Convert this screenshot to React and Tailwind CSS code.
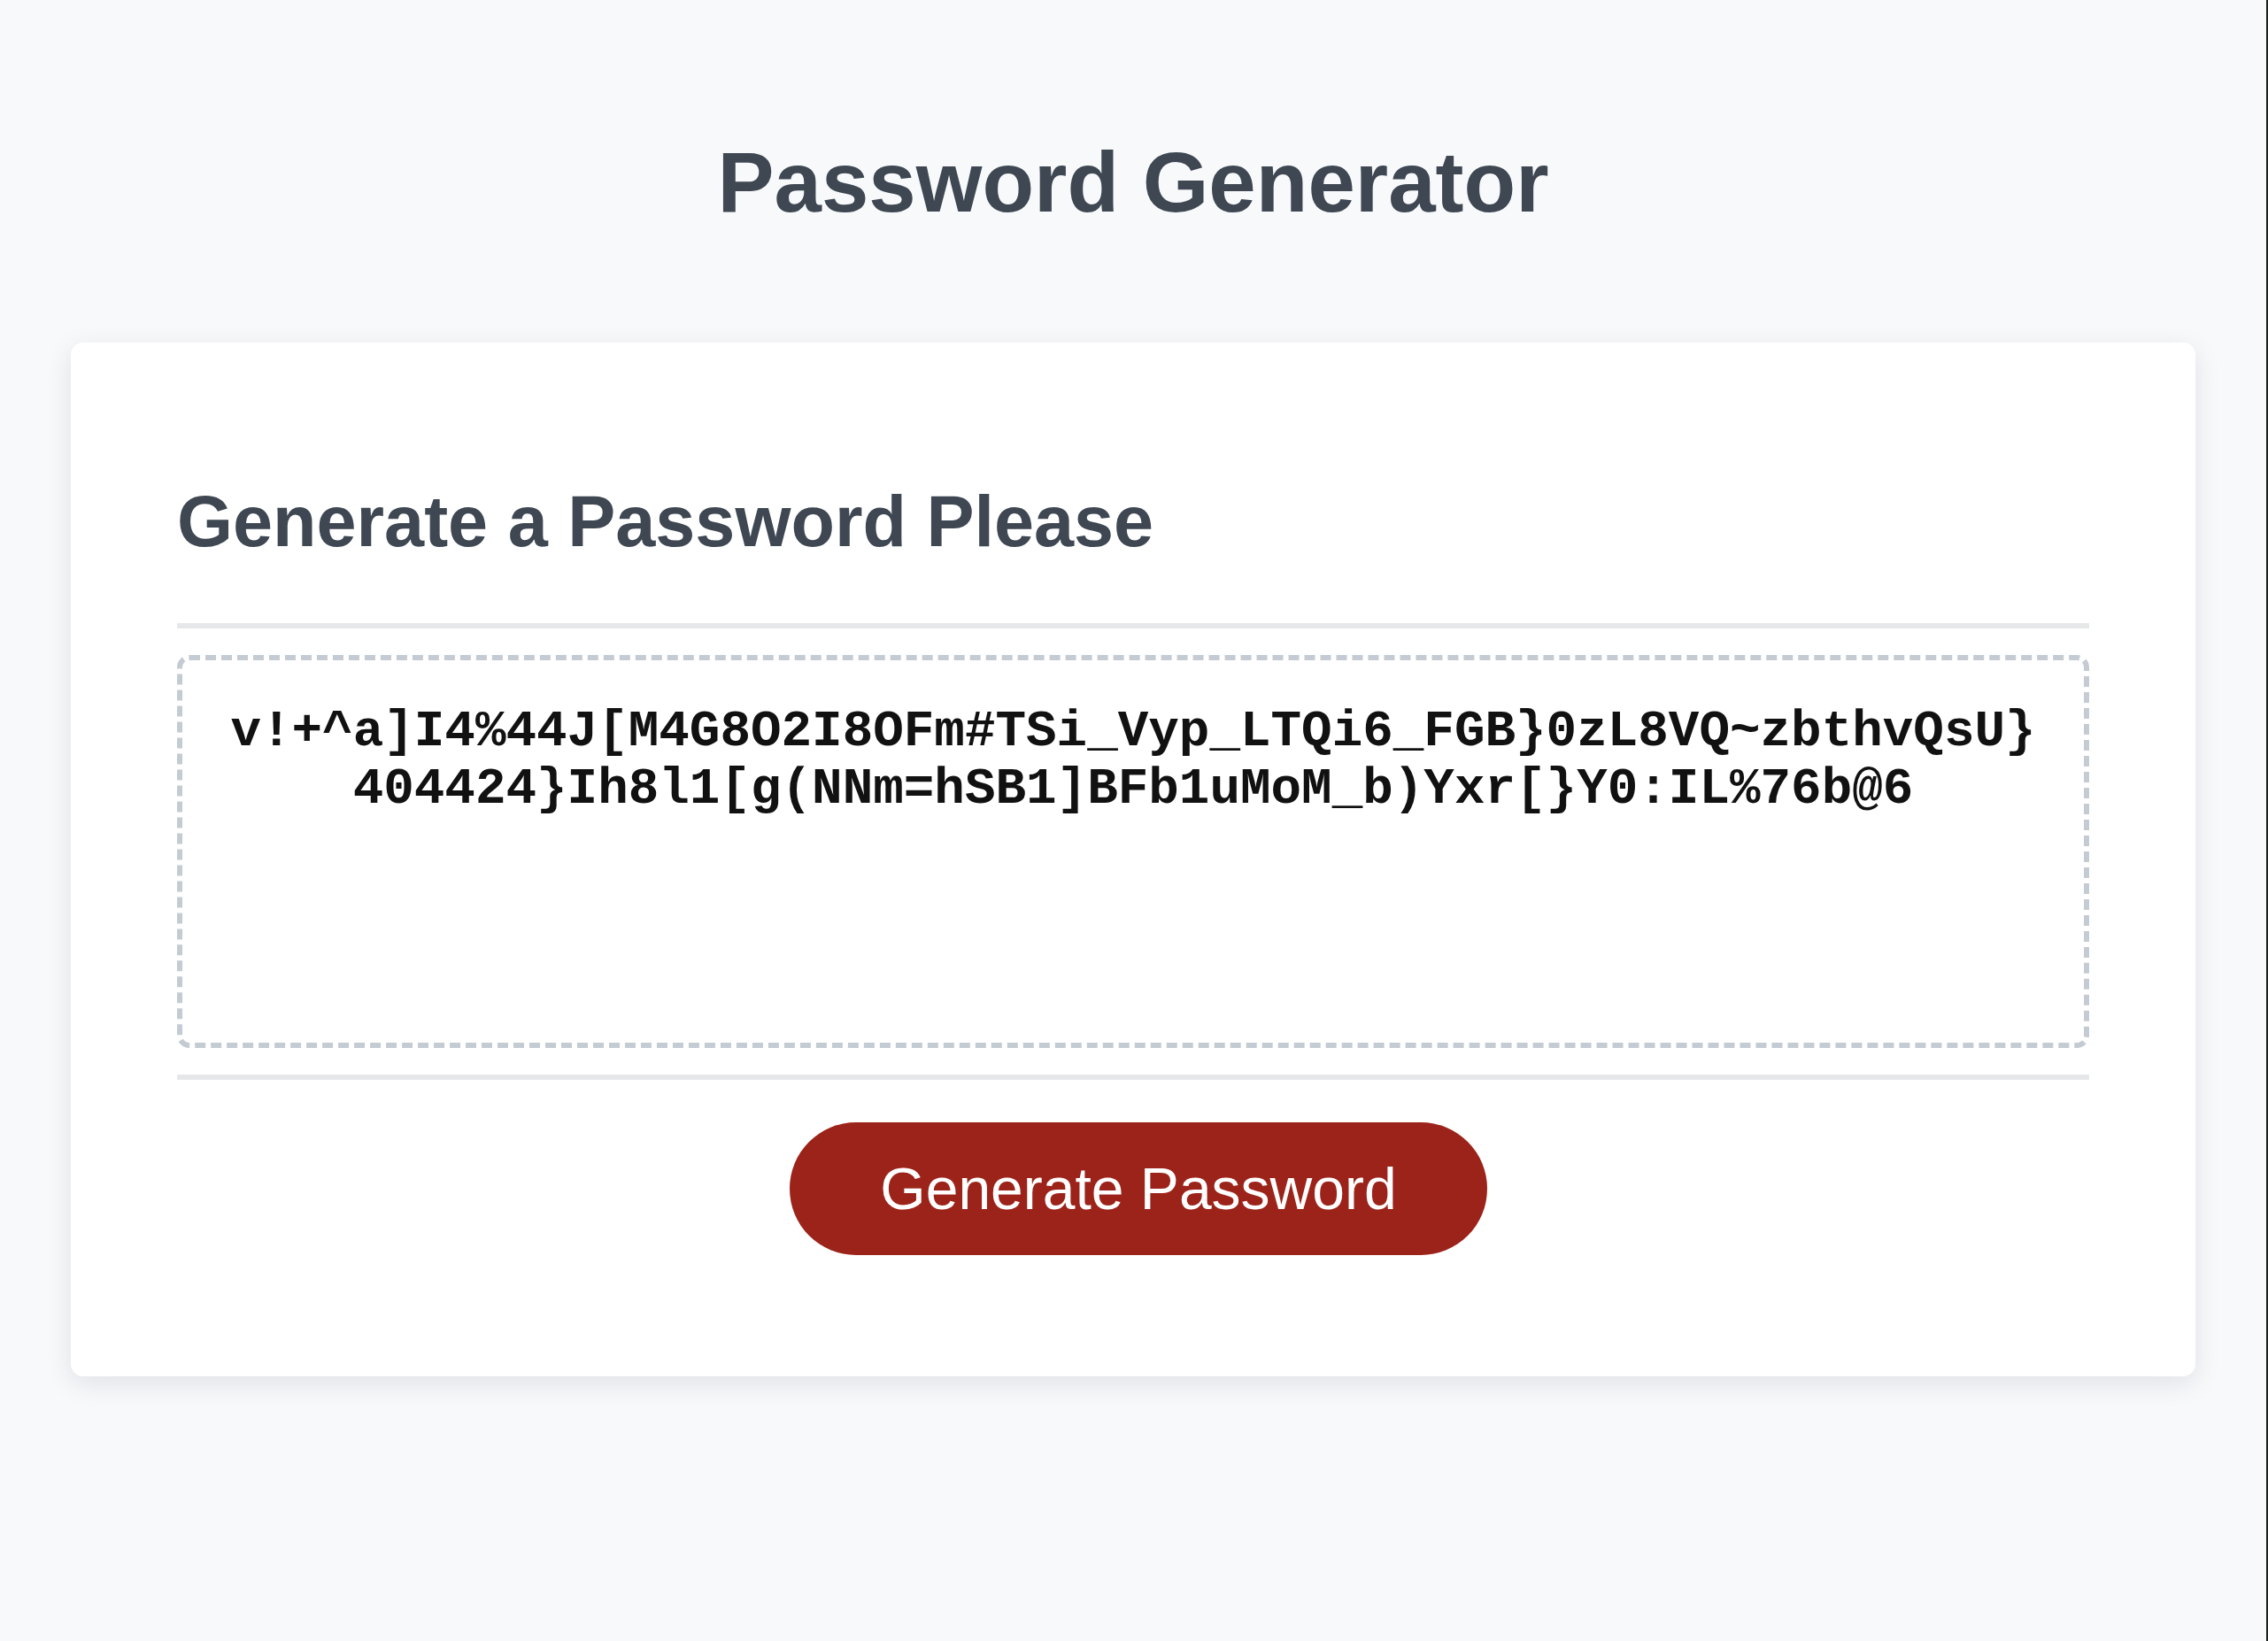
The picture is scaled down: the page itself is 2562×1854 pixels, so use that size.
import React, { useState } from 'react';

const CHARS = 'ABCDEFGHIJKLMNOPQRSTUVWXYZabcdefghijklmnopqrstuvwxyz0123456789!@#$%^&*()_+~[]{}:=';

function makePassword(len = 110) {
  let out = '';
  for (let i = 0; i < len; i++) {
    out += CHARS[Math.floor(Math.random() * CHARS.length)];
  }
  return out;
}

export default function App() {
  const [password, setPassword] = useState(
    'v!+^a]I4%44J[M4G8O2I8OFm#TSi_Vyp_LTQi6_FGB}0zL8VQ~zbthvQsU}404424}Ih8l1[g(NNm=hSB1]BFb1uMoM_b)Yxr[}Y0:IL%76b@6'
  );

  return (
    <div className="flex min-h-screen bg-[#f8f9fb]" style={{ fontFamily: '"Liberation Sans", Arial, sans-serif' }}>
      <main className="flex-1 px-[80px] pb-[120px]">
        {/* Header */}
        <h1 className="mt-[152px] text-center text-[96px] leading-[107px] font-bold text-[#3e4752]">
          Password Generator
        </h1>

        {/* Card */}
        <div className="mt-[128px] bg-white rounded-[14px] shadow-[0_8px_30px_rgba(15,23,42,0.1)] px-[120px] pt-[157px] pb-[137px]">
          <h2 className="text-[81px] leading-[90px] font-bold text-[#3e4752]">Generate a Password Please</h2>

          <div className="mt-[70px] h-[6px] bg-[#e6e7e9]"></div>

          <div className="mt-[30px] h-[444px] border-[6px] border-dashed border-[#c5cbd3] rounded-[14px] p-[48px]">
            <p
              className="text-center text-[57.6px] leading-[65px] font-bold text-[#111] break-all"
              style={{ fontFamily: '"Liberation Mono", "Courier New", monospace' }}
            >
              {password}
            </p>
          </div>

          <div className="mt-[30px] h-[6px] bg-[#e6e7e9]"></div>

          <div className="mt-[48px] flex justify-center">
            <button
              onClick={() => setPassword(makePassword())}
              className="ml-[12px] w-[788px] h-[150px] rounded-full bg-[#9c231a] text-white text-[66px] leading-none"
            >
              Generate Password
            </button>
          </div>
        </div>
      </main>
      <div className="w-[2px] bg-[#1c2120]"></div>
    </div>
  );
}
